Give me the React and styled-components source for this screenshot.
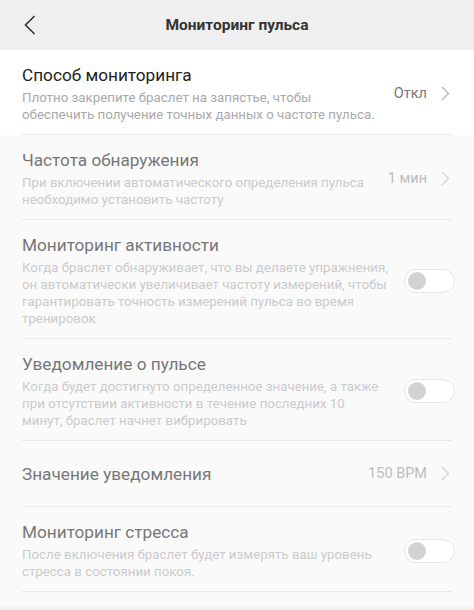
import React from 'react'
import styled, { createGlobalStyle } from 'styled-components'

const GlobalStyle = createGlobalStyle`
  html, body {
    margin: 0;
    padding: 0;
    background: #f2f2f2;
    font-family: Roboto, "Noto Sans", "Liberation Sans", sans-serif;
  }
`

const Page = styled.div`
  width: 474px;
  min-height: 610px;
  background: #f2f2f2;
`

const Header = styled.div`
  height: 50px;
  background: #efefef;
  display: flex;
  align-items: center;
  justify-content: center;
  position: relative;
`

const Back = styled.button`
  position: absolute;
  left: 18px;
  top: 12px;
  width: 24px;
  height: 26px;
  border: 0;
  padding: 0;
  background: none;
  display: flex;
  align-items: center;
  justify-content: center;
`

const HeaderTitle = styled.h1`
  margin: 0;
  font-size: 15.5px;
  font-weight: 700;
  color: #333;
`

const List = styled.div`
  background: #fafafa;
  padding-bottom: 14px;
`

const Row = styled.div`
  display: flex;
  align-items: center;
  padding: ${(p) => (p.single ? '0 22px' : '14px 22px 0')};
  background: ${(p) => (p.highlight ? '#ffffff' : 'transparent')};
`

const Inner = styled.div`
  flex: 1;
  display: flex;
  align-items: center;
  border-bottom: 1px solid #e8e8e8;
  padding-bottom: ${(p) => (p.single ? '0' : '11px')};
  height: ${(p) => (p.single ? '66px' : 'auto')};
  box-sizing: border-box;
`

const Texts = styled.div`
  flex: 1;
  min-width: 0;
`

const Title = styled.div`
  font-size: 17.2px;
  line-height: 22px;
  color: ${(p) => (p.active ? '#222' : '#777')};
`

const Desc = styled.div`
  margin-top: 3px;
  font-size: 13.3px;
  line-height: 17px;
  color: ${(p) => (p.active ? '#a9a9a9' : '#cbcbcb')};
  white-space: pre;
`

const Value = styled.div`
  display: flex;
  align-items: center;
  gap: 14px;
  font-size: 14.5px;
  color: ${(p) => (p.active ? '#777' : '#bdbdbd')};
  padding-right: 2px;
`

const Toggle = styled.div`
  width: 46px;
  height: 22px;
  border: 1px solid #e6e6e6;
  border-radius: 13px;
  background: #fff;
  display: flex;
  align-items: center;
  padding-left: 3px;
  box-sizing: content-box;
  margin-right: -3px;

  &::before {
    content: '';
    width: 18px;
    height: 18px;
    border-radius: 50%;
    background: #d2d3d5;
  }
`

const Chevron = ({ color }) => (
  <svg width="9" height="15" viewBox="0 0 9 15">
    <path d="M1 1l6.5 6.5L1 14" fill="none" stroke={color} strokeWidth="1.3" />
  </svg>
)

const rows = [
  {
    title: 'Способ мониторинга',
    desc: 'Плотно закрепите браслет на запястье, чтобы\nобеспечить получение точных данных о частоте пульса.',
    value: 'Откл',
    active: true,
  },
  {
    title: 'Частота обнаружения',
    desc: 'При включении автоматического определения пульса\nнеобходимо установить частоту',
    value: '1 мин',
  },
  {
    title: 'Мониторинг активности',
    desc: 'Когда браслет обнаруживает, что вы делаете упражнения,\nон автоматически увеличивает частоту измерений, чтобы\nгарантировать точность измерений пульса во время\nтренировок',
    toggle: true,
  },
  {
    title: 'Уведомление о пульсе',
    desc: 'Когда будет достигнуто определенное значение, а также\nпри отсутствии активности в течение последних 10\nминут, браслет начнет вибрировать',
    toggle: true,
  },
  {
    title: 'Значение уведомления',
    value: '150 BPM',
  },
  {
    title: 'Мониторинг стресса',
    desc: 'После включения браслет будет измерять ваш уровень\nстресса в состоянии покоя.',
    toggle: true,
  },
]

export default function App() {
  return (
    <Page>
      <GlobalStyle />
      <Header>
        <Back aria-label="Назад">
          <svg width="12" height="20" viewBox="0 0 12 20">
            <path d="M10.5 1L1.5 10l9 9" fill="none" stroke="#333" strokeWidth="1.6" />
          </svg>
        </Back>
        <HeaderTitle>Мониторинг пульса</HeaderTitle>
      </Header>
      <List>
        {rows.map((r) => {
          const single = !r.desc
          return (
            <Row key={r.title} highlight={r.active} single={single}>
              <Inner single={single}>
                <Texts>
                  <Title active={r.active}>{r.title}</Title>
                  {r.desc && <Desc active={r.active}>{r.desc}</Desc>}
                </Texts>
                {r.value && (
                  <Value active={r.active}>
                    {r.value}
                    <Chevron color={r.active ? '#b5b5b5' : '#d5d5d5'} />
                  </Value>
                )}
                {r.toggle && <Toggle />}
              </Inner>
            </Row>
          )
        })}
      </List>
    </Page>
  )
}
